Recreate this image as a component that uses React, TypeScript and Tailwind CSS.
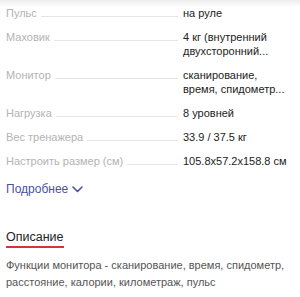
import React from "react";

type Spec = { label: string; value: string };

const specs: Spec[] = [
  { label: "Пульс", value: "на руле" },
  { label: "Маховик", value: "4 кг (внутренний двухсторонний..." },
  { label: "Монитор", value: "сканирование, время, спидометр..." },
  { label: "Нагрузка", value: "8 уровней" },
  { label: "Вес тренажера", value: "33.9 / 37.5 кг" },
  { label: "Настроить размер (см)", value: "105.8x57.2x158.8 см" },
];

const SpecRow = ({ label, value }: Spec) => (
  <div className="grid grid-cols-[172px_1fr] gap-[5px]">
    <div className="flex h-[14px] items-start">
      <span className="whitespace-nowrap text-[11px] leading-[14px] text-[#b3b3b3]">{label}</span>
      <div className="ml-[4px] mt-[10px] h-px flex-1 bg-[#e4e4e4]" />
    </div>
    <div className="pr-[12px] text-[11px] leading-[14px] text-[#222]">{value}</div>
  </div>
);

export default function App() {
  return (
    <div className="relative w-[300px] overflow-hidden bg-white font-['Liberation_Sans',Arial,sans-serif]">
      <div className="pointer-events-none absolute inset-x-0 top-0 h-[7px] bg-gradient-to-b from-[#ececec] to-white/0" />

      <div className="flex flex-col gap-[10px] pl-[6px] pt-[6px]">
        {specs.map((s) => (
          <SpecRow key={s.label} {...s} />
        ))}
      </div>

      <button className="ml-[6px] mt-[13px] flex items-center gap-[4px] text-[12px] leading-[16px] text-[#4b50a6]">
        Подробнее
        <svg width="11" height="7" viewBox="0 0 11 7" fill="none">
          <path d="M1 1l4.5 4.5L10 1" stroke="currentColor" strokeWidth="1.6" strokeLinecap="round" strokeLinejoin="round" />
        </svg>
      </button>

      <div className="ml-[6px] mt-[32px] inline-block border-b-2 border-[#d2353b] pb-[1px] text-[12.5px] leading-[16px] text-[#222]">
        Описание
      </div>

      <p className="mt-[9px] pl-[6px] pr-[12px] text-[11px] leading-[17px] text-[#555]">
        Функции монитора - сканирование, время, спидометр, расстояние, калории, километраж, пульс
      </p>
    </div>
  );
}
